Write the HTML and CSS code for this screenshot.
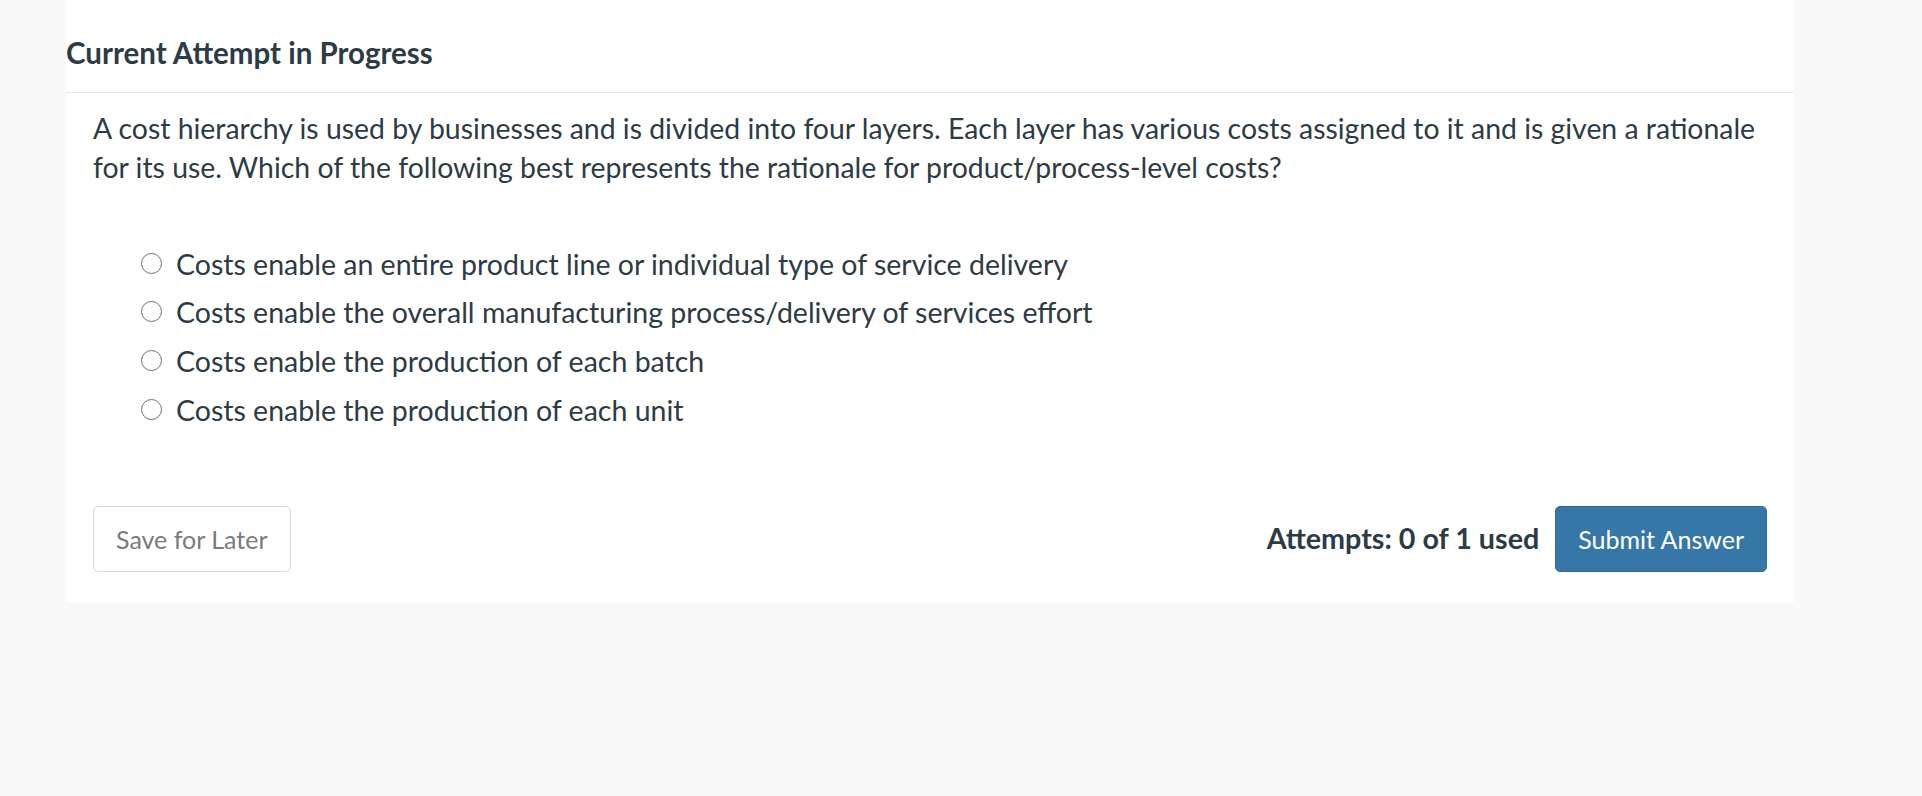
FILE: index.html
```html
<!DOCTYPE html>
<html lang="en">
<head>
<meta charset="utf-8">
<title>Current Attempt in Progress</title>
<link rel="stylesheet" href="styles.css">
</head>
<body>
<main class="card">
  <header class="card-header">
    <h2 class="card-title">Current Attempt in Progress</h2>
  </header>
  <section class="card-body">
    <p class="question">A cost hierarchy is used by businesses and is divided into four layers. Each layer has various costs assigned to it and is given a rationale for its use. Which of the following best represents the rationale for product/process-level costs?</p>
    <ul class="options">
      <li class="option"><span class="radio"></span><span class="option-text">Costs enable an entire product line or individual type of service delivery</span></li>
      <li class="option"><span class="radio"></span><span class="option-text">Costs enable the overall manufacturing process/delivery of services effort</span></li>
      <li class="option"><span class="radio"></span><span class="option-text">Costs enable the production of each batch</span></li>
      <li class="option"><span class="radio"></span><span class="option-text">Costs enable the production of each unit</span></li>
    </ul>
    <div class="actions">
      <button class="btn btn-secondary" type="button">Save for Later</button>
      <div class="actions-right">
        <span class="attempts">Attempts: 0 of 1 used</span>
        <button class="btn btn-primary" type="button">Submit Answer</button>
      </div>
    </div>
  </section>
</main>
</body>
</html>
```
FILE: styles.css
```css
html, body {
  margin: 0;
  padding: 0;
}
body {
  background: #f9f9f9;
  font-family: Lato, "Open Sans", sans-serif;
  color: #2d3b45;
}
.card {
  background: #ffffff;
  margin-left: 66px;
  width: 1728px;
  padding-bottom: 30px;
}
.card-header {
  padding: 33px 0 20px 0;
  border-bottom: 1px solid #e8e8e8;
}
.card-title {
  margin: 0;
  font-size: 29.5px;
  line-height: 39px;
  font-weight: 700;
}
.card-body {
  padding: 16px 27px 0 27px;
}
.question {
  margin: 0;
  font-size: 28.4px;
  line-height: 39px;
}
.options {
  list-style: none;
  margin: 57.5px 0 0 0;
  padding: 0 0 0 48px;
  display: flex;
  flex-direction: column;
  gap: 9.7px;
}
.option {
  display: flex;
  align-items: center;
  font-size: 28.5px;
  line-height: 39px;
}
.radio {
  box-sizing: border-box;
  width: 21px;
  height: 21px;
  border: 1.5px solid #6f6f6f;
  border-radius: 50%;
  margin-right: 14px;
  flex: none;
  margin-top: -2px;
}
.actions {
  margin-top: 76px;
  display: flex;
  justify-content: space-between;
  align-items: center;
}
.actions-right {
  display: flex;
  align-items: center;
  gap: 16px;
}
.attempts {
  font-size: 28.7px;
  font-weight: 700;
  line-height: 39px;
}
.btn {
  font-family: Lato, "Open Sans", sans-serif;
  font-size: 25px;
  line-height: 34px;
  padding: 15px 22px;
  border-radius: 5px;
  cursor: pointer;
}
.btn-secondary {
  background: #ffffff;
  color: #7b7b7b;
  border: 1px solid #d9d9d9;
}
.btn-primary {
  background: #3677a8;
  color: #ffffff;
  border: 1px solid #2f6a97;
}
```
